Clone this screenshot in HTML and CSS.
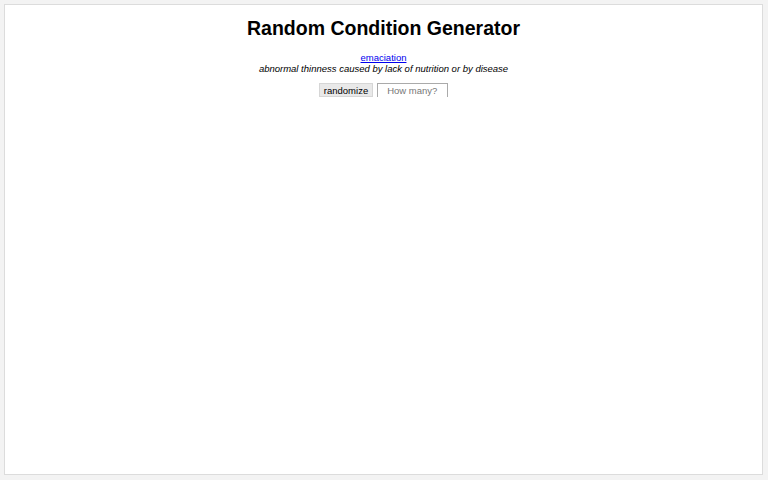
FILE: index.html
```html
<!DOCTYPE html>
<html lang="en">
<head>
    <meta charset="UTF-8">
    <meta name="viewport" content="width=device-width, initial-scale=1.0">
    <title>Random Condition Generator</title>
    <link rel="stylesheet" href="styles.css">
</head>
<body>
    <div class="page">
        <h1>Random Condition Generator</h1>
        <div id="result" class="result">
            <a href="#" class="term">emaciation</a>
            <p class="definition">abnormal thinness caused by lack of nutrition or by disease</p>
        </div>
        <form id="gen-form" class="controls">
            <button type="submit">randomize</button>
            <input type="text" id="count" placeholder="How many?">
        </form>
    </div>
</body>
</html>
```

FILE: styles.css
```css
html, body {
    height: 100%;
}

body {
    margin: 0;
    padding: 4px 5px 5px 4px;
    box-sizing: border-box;
    background: #f3f3f3;
    font-family: "Liberation Sans", Arial, sans-serif;
}

.page {
    height: 100%;
    box-sizing: border-box;
    background: #fff;
    border: 1px solid #dcdcdc;
    text-align: center;
    padding-top: 13px;
}

h1 {
    margin: 0 0 14px 0;
    font-size: 19.5px;
    line-height: 20px;
}

.result {
    font-size: 9.5px;
    line-height: 11px;
}

.term {
    color: #0000ee;
}

.definition {
    margin: 0;
    font-style: italic;
}

.controls {
    margin-top: 9px;
    display: flex;
    justify-content: center;
    gap: 4px;
}

button, input {
    font-family: "Liberation Sans", Arial, sans-serif;
    font-size: 9.5px;
    margin: 0;
}

button {
    height: 14px;
    padding: 0 4px;
    background: #e9e9e9;
    border: 1px solid #d6d6d6;
    color: #000;
}

input {
    width: 71px;
    height: 14px;
    box-sizing: border-box;
    padding: 0 0 0 9px;
    border: 1px solid #aaa;
    border-bottom: none;
}

input::placeholder {
    color: #777;
}
```
